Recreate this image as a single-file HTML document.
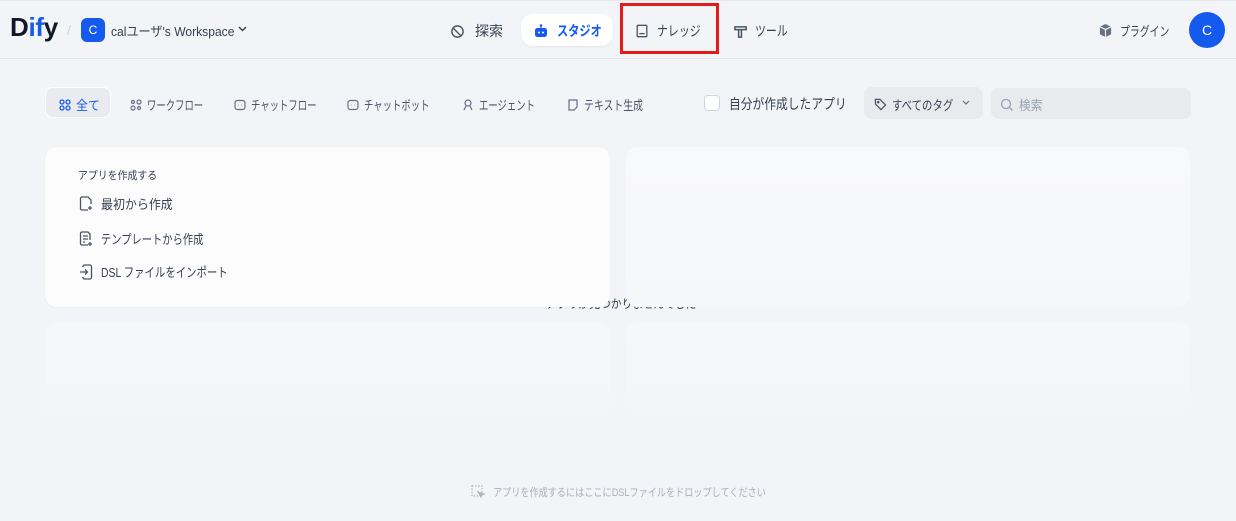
<!DOCTYPE html>
<html><head><meta charset="utf-8"><style>
*{margin:0;padding:0;box-sizing:border-box}
body{width:1236px;height:521px;background:#f2f4f7;font-family:"Liberation Sans","Noto Sans CJK JP",sans-serif;position:relative;overflow:hidden;color:#354052}
.abs{position:absolute}
.hdr{left:0;top:0;width:1236px;height:59px;border-bottom:1px solid #e3e5ea;border-top:1px solid #e6e8ec}
.nav{font-size:14px;display:flex;align-items:center;gap:8px;color:#354052;white-space:nowrap}
.tab{font-size:13px;color:#495464;display:flex;align-items:center;gap:5px;white-space:nowrap}
.s{display:inline-block;transform-origin:left center}
svg{display:block;flex:none}
.card{background:#fcfcfd;border-radius:12px}
</style></head><body>
<div class="abs hdr"></div>
<div class="abs" style="left:10px;top:12px;font-size:26px;font-weight:bold;color:#101828;letter-spacing:-0.3px">D<span style="color:#155aef">if</span>y</div>
<div class="abs" style="left:67px;top:22px;color:#d0d5dd;font-size:14px">/</div>
<div class="abs" style="left:81px;top:18px;width:24px;height:24px;border-radius:6px;background:#155aef;color:#fff;font-size:12px;text-align:center;line-height:24px">C</div>
<div class="abs" style="left:111px;top:21px;font-size:13px;color:#354052;white-space:nowrap"><span class="s" style="transform:scaleX(0.93)">calユーザ's Workspace</span></div>
<svg class="abs" style="left:238px;top:26px" width="9" height="6" viewBox="0 0 9 6" fill="none" stroke="#354052" stroke-width="1.4"><path d="M1 1l3.5 3.5L8 1"/></svg>

<div class="abs nav" style="left:450px;top:21px"><svg width="15" height="15" viewBox="0 0 16 16" fill="none" stroke="#495464" stroke-width="1.5"><circle cx="8" cy="8" r="6"/><path d="M3 4l9 9"/></svg><span style="margin-left:2px">探索</span></div>
<div class="abs" style="left:521px;top:14px;width:92px;height:32px;background:#fff;border-radius:12px;box-shadow:0 1px 2px rgba(16,24,40,.06)"></div>
<div class="abs nav" style="left:533px;top:21px;color:#155aef;font-weight:bold"><svg width="16" height="16" viewBox="0 0 16 16"><rect x="2" y="5" width="12" height="9" rx="2.5" fill="#155aef"/><circle cx="8" cy="2.5" r="1.3" fill="#155aef"/><rect x="7.4" y="3" width="1.2" height="2.5" fill="#155aef"/><circle cx="6" cy="9.5" r="1" fill="#fff"/><circle cx="10" cy="9.5" r="1" fill="#fff"/></svg><span class="s" style="transform:scaleX(0.8)">スタジオ</span></div>
<div class="abs" style="left:620px;top:3px;width:99px;height:51px;border:3px solid #e31b1b"></div>
<div class="abs nav" style="left:635px;top:21px"><svg width="14" height="14" viewBox="0 0 16 16" fill="none" stroke="#495464" stroke-width="1.5"><rect x="2.5" y="1.5" width="11" height="13" rx="1"/><path d="M5 11h6"/></svg><span class="s" style="margin-left:0px;transform:scaleX(0.78)">ナレッジ</span></div>
<div class="abs nav" style="left:733px;top:21px"><svg width="15" height="15" viewBox="0 0 16 16" fill="none" stroke="#495464" stroke-width="1.6"><path d="M2 3h12v3H2z M6 6v8h3V6"/></svg><span class="s" style="margin-left:-1px;transform:scaleX(0.78)">ツール</span></div>
<div class="abs nav" style="left:1098px;top:21px;font-size:13px;gap:7px"><svg width="15" height="15" viewBox="0 0 16 16"><path d="M8 1l6 3v8l-6 3-6-3V4z" fill="#676f83"/><path d="M2 4l6 3 6-3M8 7v8" stroke="#f2f4f7" stroke-width="1.2" fill="none"/></svg><span class="s" style="transform:scaleX(0.76)">プラグイン</span></div>
<div class="abs" style="left:1189px;top:12px;width:36px;height:36px;border-radius:50%;background:#155aef;color:#fff;text-align:center;line-height:36px;font-size:14px">C</div>

<div class="abs" style="left:45px;top:87px;width:66px;height:31px;background:#e9ebf0;border:1px solid #fff;border-radius:8px"></div>
<div class="abs tab" style="left:59px;top:95px;color:#155aef"><svg width="12" height="12" viewBox="0 0 12 12" fill="none" stroke="#155aef" stroke-width="1.3"><circle cx="3" cy="3" r="2"/><circle cx="9" cy="3" r="2"/><circle cx="3" cy="9" r="2"/><circle cx="9" cy="9" r="2"/></svg><span class="s" style="transform:scaleX(0.92)">全て</span></div>
<div class="abs tab" style="left:130px;top:95px"><svg width="12" height="12" viewBox="0 0 12 12" fill="none" stroke="#676f83" stroke-width="1.2"><circle cx="3" cy="9" r="2"/><circle cx="9" cy="3" r="2"/><circle cx="3" cy="3" r="1.5"/><circle cx="9" cy="9" r="1.5"/></svg><span class="s" style="transform:scaleX(0.72)">ワークフロー</span></div>
<div class="abs tab" style="left:234px;top:95px"><svg width="12" height="12" viewBox="0 0 12 12" fill="none" stroke="#676f83" stroke-width="1.2"><rect x="1" y="1.5" width="10" height="9" rx="2.5"/><path d="M4 6h.5M7.5 6h.5"/></svg><span class="s" style="transform:scaleX(0.72)">チャットフロー</span></div>
<div class="abs tab" style="left:347px;top:95px"><svg width="12" height="12" viewBox="0 0 12 12" fill="none" stroke="#676f83" stroke-width="1.2"><rect x="1" y="1.5" width="10" height="9" rx="2.5"/><path d="M4 6h.5M7.5 6h.5"/></svg><span class="s" style="transform:scaleX(0.72)">チャットボット</span></div>
<div class="abs tab" style="left:462px;top:95px"><svg width="12" height="12" viewBox="0 0 12 12" fill="none" stroke="#676f83" stroke-width="1.2"><circle cx="6" cy="4" r="3"/><path d="M2 11l2-4M10 11l-2-4"/></svg><span class="s" style="transform:scaleX(0.72)">エージェント</span></div>
<div class="abs tab" style="left:567px;top:95px"><svg width="12" height="12" viewBox="0 0 12 12" fill="none" stroke="#676f83" stroke-width="1.2"><path d="M2 1h8v7l-3 3H2z"/></svg><span class="s" style="transform:scaleX(0.76)">テキスト生成</span></div>
<div class="abs" style="left:704px;top:95px;width:16px;height:16px;border:1px solid #d0d5dd;border-radius:4px;background:#fff"></div>
<div class="abs" style="left:729px;top:94px;font-size:14px;color:#354052;white-space:nowrap"><span class="s" style="transform:scaleX(0.84)">自分が作成したアプリ</span></div>
<div class="abs" style="left:864px;top:87px;width:119px;height:32px;background:#e8eaee;border-radius:8px"></div>
<div class="abs tab" style="left:874px;top:95px;color:#354052"><svg width="13" height="13" viewBox="0 0 14 14" fill="none" stroke="#495464" stroke-width="1.3"><path d="M1.5 1.5h5l6 6-5 5-6-6z"/><circle cx="4.5" cy="4.5" r=".8"/></svg><span class="s" style="transform:scaleX(0.8)">すべてのタグ</span></div>
<svg class="abs" style="left:962px;top:100px" width="8" height="5" viewBox="0 0 8 5" fill="none" stroke="#676f83" stroke-width="1.2"><path d="M1 1l3 3 3-3"/></svg>
<div class="abs" style="left:991px;top:88px;width:200px;height:31px;background:#e8eaee;border-radius:8px"></div>
<div class="abs tab" style="left:1000px;top:95px;color:#98a2b2"><svg width="14" height="14" viewBox="0 0 14 14" fill="none" stroke="#98a2b2" stroke-width="1.3"><circle cx="6" cy="6" r="4.5"/><path d="M9.5 9.5l3 3"/></svg><span class="s" style="transform:scaleX(0.9)">検索</span></div>

<div class="abs" style="left:546px;top:295px;font-size:12px;color:#354052;white-space:nowrap"><span class="s" style="transform:scaleX(0.9)">アプリが見つかりませんでした</span></div>
<div class="abs card" style="left:45px;top:147px;width:565px;height:160px;box-shadow:0 1px 2px rgba(16,24,40,.04)"></div>
<div class="abs" style="left:78px;top:167px;font-size:11px;color:#354052;white-space:nowrap"><span class="s" style="transform:scaleX(0.9)">アプリを作成する</span></div>
<div class="abs tab" style="left:79px;top:194px;font-size:13px;gap:8px;color:#354052"><svg width="14" height="16" viewBox="0 0 14 16" fill="none" stroke="#495464" stroke-width="1.3"><path d="M9 14H3a1.5 1.5 0 01-1.5-1.5v-10A1.5 1.5 0 013 1h6l3 3v4"/><path d="M11 10v4M9 12h4"/></svg><span class="s" style="transform:scaleX(0.92)">最初から作成</span></div>
<div class="abs tab" style="left:79px;top:229px;font-size:13px;gap:8px;color:#354052"><svg width="14" height="16" viewBox="0 0 14 16" fill="none" stroke="#495464" stroke-width="1.3"><path d="M9 14H3a1.5 1.5 0 01-1.5-1.5v-10A1.5 1.5 0 013 1h6l2 2v6"/><path d="M4 5h5M4 8h5M4 11h2M11 11v4M9 13h4"/></svg><span class="s" style="transform:scaleX(0.79)">テンプレートから作成</span></div>
<div class="abs tab" style="left:79px;top:262px;font-size:13px;gap:8px;color:#354052"><svg width="14" height="16" viewBox="0 0 14 16" fill="none" stroke="#495464" stroke-width="1.3"><path d="M4 3V2.5A1.5 1.5 0 015.5 1H11a1.5 1.5 0 011.5 1.5v11A1.5 1.5 0 0111 15H5.5A1.5 1.5 0 014 13.5V13"/><path d="M1 8h7M6 5.5L8.5 8 6 10.5"/></svg><span class="s" style="transform:scaleX(0.8)">DSL ファイルをインポート</span></div>
<div class="abs" style="left:626px;top:147px;width:564px;height:160px;border-radius:12px;background:linear-gradient(#f8f9fb,#f6f7f9)"></div>
<div class="abs" style="left:45px;top:323px;width:565px;height:120px;border-radius:12px;background:linear-gradient(#f6f7f9,#f2f4f7)"></div>
<div class="abs" style="left:626px;top:323px;width:564px;height:120px;border-radius:12px;background:linear-gradient(#f6f7f9,#f2f4f7)"></div>
<div class="abs tab" style="left:471px;top:484px;font-size:11px;color:#a8afbd;gap:8px"><svg width="14" height="14" viewBox="0 0 14 14" fill="none" stroke="#b0b6c2" stroke-width="1.2" stroke-dasharray="1.5 1.5"><rect x="1" y="1" width="10" height="10"/><path d="M7 7l6 2-2 1-1 2z" stroke-dasharray="none" fill="#b0b6c2"/></svg><span class="s" style="transform:scaleX(0.83)">アプリを作成するにはここにDSLファイルをドロップしてください</span></div>
</body></html>
